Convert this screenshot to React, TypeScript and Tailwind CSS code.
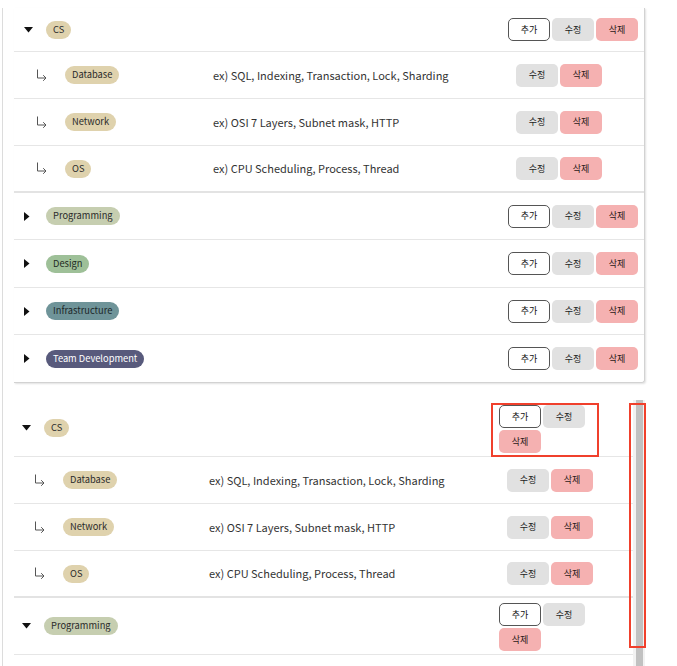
import React from "react";

const FONT = { fontFamily: '"Noto Sans CJK KR", "Noto Sans", sans-serif' };

type Tag = { name: string; bg: string; fg: string };

const TAGS: Record<string, Tag> = {
  CS: { name: "CS", bg: "bg-[#dfd2ad]", fg: "text-[#2a2a2a]" },
  Database: { name: "Database", bg: "bg-[#dfd2ad]", fg: "text-[#2a2a2a]" },
  Network: { name: "Network", bg: "bg-[#dfd2ad]", fg: "text-[#2a2a2a]" },
  OS: { name: "OS", bg: "bg-[#dfd2ad]", fg: "text-[#2a2a2a]" },
  Programming: { name: "Programming", bg: "bg-[#c6ceb0]", fg: "text-[#2a2a2a]" },
  Design: { name: "Design", bg: "bg-[#9ec098]", fg: "text-[#1f2a1f]" },
  Infrastructure: { name: "Infrastructure", bg: "bg-[#6f9499]", fg: "text-[#1c2628]" },
  Team: { name: "Team Development", bg: "bg-[#585a7c]", fg: "text-white" },
};

function Pill({ t }: { t: Tag }) {
  return (
    <span
      className={`inline-flex items-center h-[18px] px-[7px] rounded-full text-[9.3px] leading-none ${t.bg} ${t.fg}`}
    >
      {t.name}
    </span>
  );
}

function Caret({ open }: { open: boolean }) {
  return open ? (
    <svg width="9" height="6" viewBox="0 0 9 6" className="block">
      <polygon points="0,0 9,0 4.5,5.5" fill="#111" />
    </svg>
  ) : (
    <svg width="6" height="9" viewBox="0 0 6 9" className="block">
      <polygon points="0,0 5.5,4.5 0,9" fill="#111" />
    </svg>
  );
}

function ChildArrow() {
  return (
    <svg width="11" height="13" viewBox="0 0 11 13" className="block">
      <path d="M1.5 0.5 V9 H10" fill="none" stroke="#555" strokeWidth="1" />
      <path d="M7.2 6.2 L10 9 L7.2 11.8" fill="none" stroke="#555" strokeWidth="1" />
    </svg>
  );
}

function AddBtn() {
  return (
    <button className="w-[42px] h-[23px] rounded-[5px] border border-[#555] bg-white text-[9px] text-[#111] flex items-center justify-center">
      추가
    </button>
  );
}
function EditBtn() {
  return (
    <button className="w-[42px] h-[23px] rounded-[5px] bg-[#e1e1e1] text-[9px] text-[#222] flex items-center justify-center">
      수정
    </button>
  );
}
function DelBtn() {
  return (
    <button className="w-[42px] h-[23px] rounded-[5px] bg-[#f5b1b1] text-[9px] text-[#2a1818] flex items-center justify-center">
      삭제
    </button>
  );
}

const CHILDREN = [
  { t: TAGS.Database, d: "ex) SQL, Indexing, Transaction, Lock, Sharding" },
  { t: TAGS.Network, d: "ex) OSI 7 Layers, Subnet mask, HTTP" },
  { t: TAGS.OS, d: "ex) CPU Scheduling, Process, Thread" },
];

function TopHeaderRow({ t, open, h, last }: { t: Tag; open: boolean; h: string; last?: boolean }) {
  return (
    <div className={`flex items-center ${h} pl-[10px] pr-[6px] ${last ? "" : "border-b border-[#e6e6e6]"}`}>
      <div className="w-[22px] flex items-center">
        <Caret open={open} />
      </div>
      <Pill t={t} />
      <div className="ml-auto flex gap-[2px]">
        <AddBtn />
        <EditBtn />
        <DelBtn />
      </div>
    </div>
  );
}

function ChildRow({
  t,
  d,
  last,
  pl,
  tagW,
  descW,
}: {
  t: Tag;
  d: string;
  last?: boolean;
  pl: string;
  tagW: string;
  descW: string;
}) {
  return (
    <div
      className={`flex items-center h-[47px] ${pl} ${
        last ? "border-b-2 border-[#e3e3e3]" : "border-b border-[#e6e6e6]"
      }`}
    >
      <div className="w-[29px] flex items-center">
        <ChildArrow />
      </div>
      <div className={`${tagW} flex items-center`}>
        <Pill t={t} />
      </div>
      <div className={`${descW} text-[11px] leading-none text-[#333]`}>{d}</div>
      <div className="flex gap-[2px]">
        <EditBtn />
        <DelBtn />
      </div>
    </div>
  );
}

export default function App() {
  return (
    <div className="w-[677px] h-[666px] bg-white overflow-hidden" style={FONT}>
      <div className="h-full pl-[2px]">
        <div className="h-full border-l border-[#dcdcdc] pl-[11px]">
          {/* top card */}
          <div className="mt-[8px] w-[631px] border-r border-b border-[#d2d2d2] rounded-br-[3px] shadow-[1px_1px_2px_rgba(0,0,0,0.12)]">
            <TopHeaderRow t={TAGS.CS} open h="h-[44px]" />
            {CHILDREN.map((c, i) => (
              <ChildRow
                key={c.t.name}
                t={c.t}
                d={c.d}
                last={i === CHILDREN.length - 1}
                pl="pl-[22px]"
                tagW="w-[148px]"
                descW="w-[303px]"
              />
            ))}
            <TopHeaderRow t={TAGS.Programming} open={false} h="h-[47px]" />
            <TopHeaderRow t={TAGS.Design} open={false} h="h-[48px]" />
            <TopHeaderRow t={TAGS.Infrastructure} open={false} h="h-[47px]" />
            <TopHeaderRow t={TAGS.Team} open={false} h="h-[47px]" last />
          </div>

          {/* bottom section */}
          <div className="mt-[17px] flex">
            <div className="w-[619px]">
              <div className="flex h-[57px] border-b border-[#e6e6e6] pl-[8px]">
                <div className="flex items-center flex-1">
                  <div className="w-[22px] flex items-center">
                    <Caret open />
                  </div>
                  <Pill t={TAGS.CS} />
                </div>
                <div className="mt-[3px] mr-[34px] w-[108px] h-[54px] border-2 border-[#f0402c] pl-[6px] flex flex-wrap content-start gap-[2px]">
                  <AddBtn />
                  <EditBtn />
                  <DelBtn />
                </div>
              </div>
              {CHILDREN.map((c, i) => (
                <ChildRow
                  key={c.t.name}
                  t={c.t}
                  d={c.d}
                  last={i === CHILDREN.length - 1}
                  pl="pl-[20px]"
                  tagW="w-[146px]"
                  descW="w-[298px]"
                />
              ))}
              <div className="flex h-[57px] border-b border-[#e6e6e6] pl-[8px]">
                <div className="flex items-center flex-1">
                  <div className="w-[22px] flex items-center">
                    <Caret open />
                  </div>
                  <Pill t={TAGS.Programming} />
                </div>
                <div className="mt-[5px] mr-[34px] w-[108px] pl-[8px] flex flex-wrap content-start gap-[2px]">
                  <AddBtn />
                  <EditBtn />
                  <DelBtn />
                </div>
              </div>
            </div>
            {/* scrollbar */}
            <div className="relative w-[12px] h-[270px] flex">
              <div className="w-[3px] bg-[#f2f2f2]" />
              <div className="w-[7px] bg-[#c1c1c1]" />
              <div className="w-[2px] bg-[#f2f2f2]" />
              <div className="absolute left-[-4px] top-[3px] w-[17px] h-[245px] border-2 border-[#f0402c]" />
            </div>
          </div>
        </div>
      </div>
    </div>
  );
}
